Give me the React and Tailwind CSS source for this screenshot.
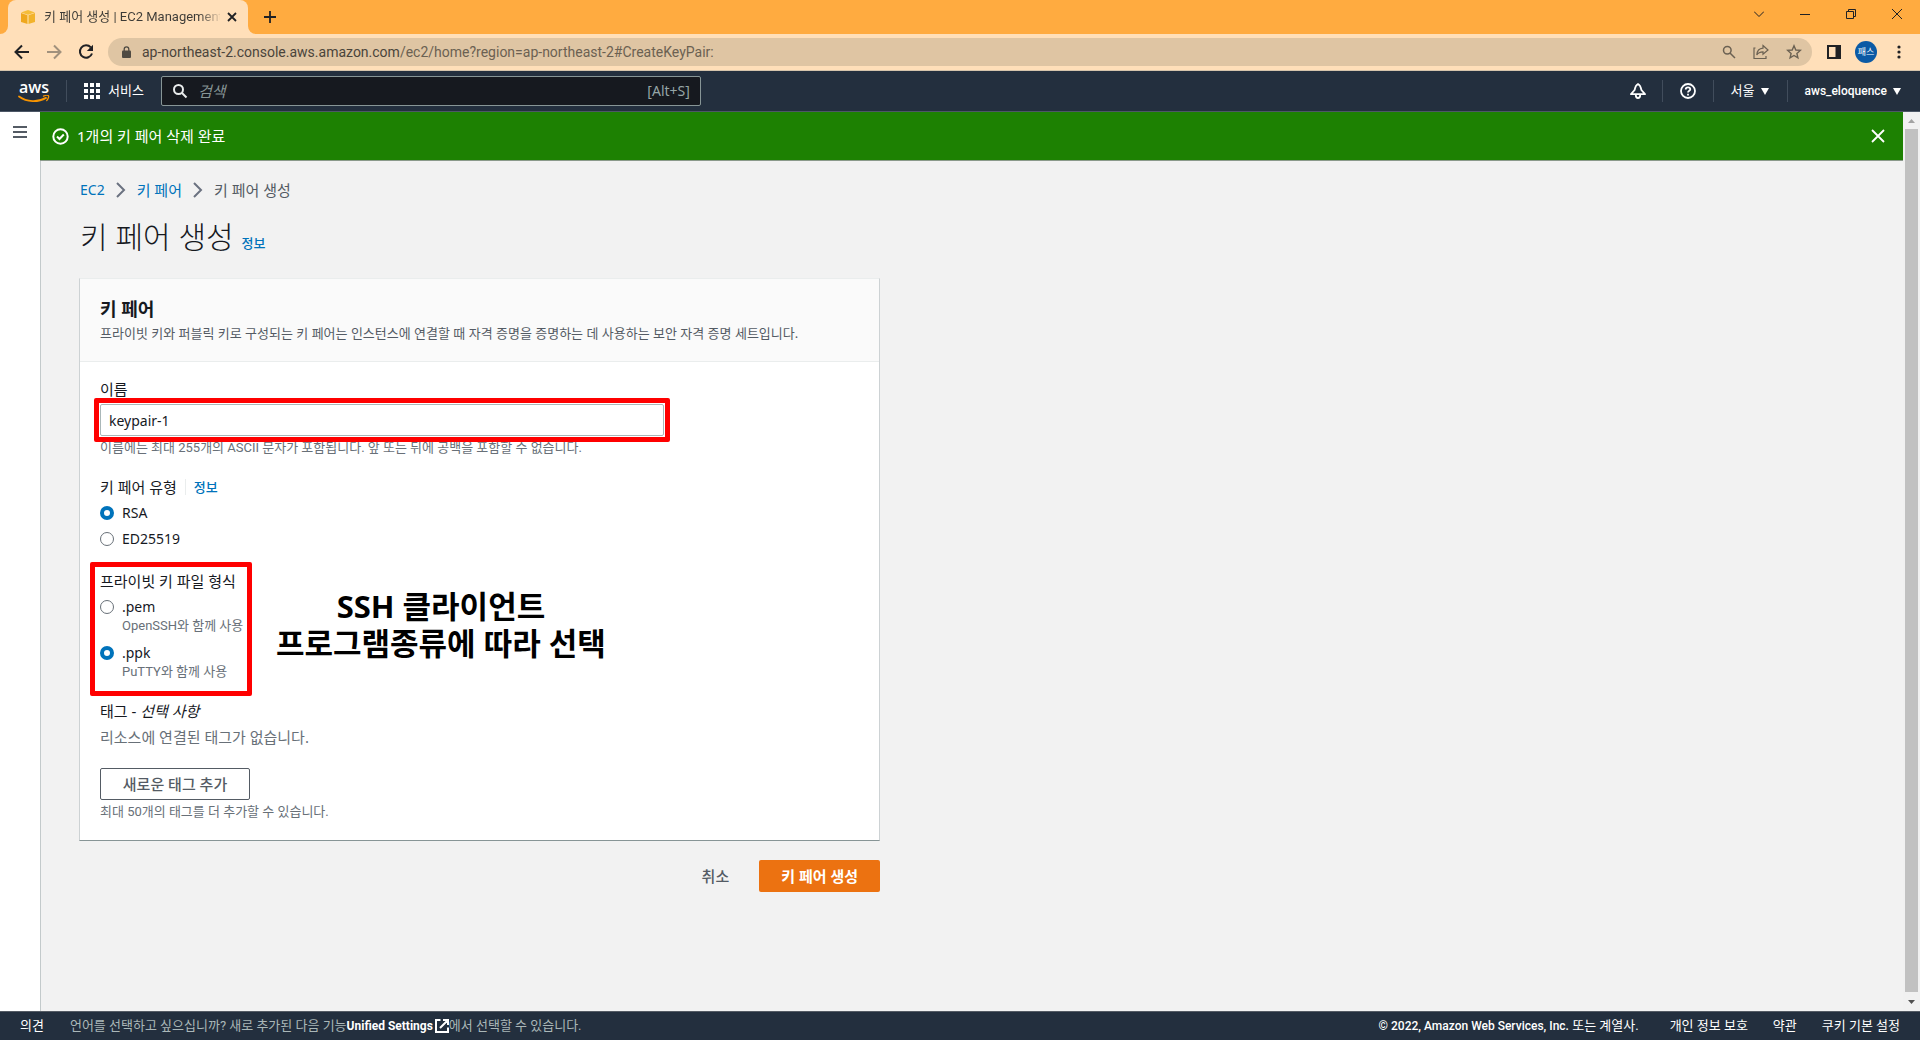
import { useState } from 'react';

const KEY_TYPES = [
  { value: 'rsa', label: 'RSA' },
  { value: 'ed25519', label: 'ED25519' },
];

const FILE_FORMATS = [
  { value: 'pem', label: '.pem', hint: 'OpenSSH와 함께 사용' },
  { value: 'ppk', label: '.ppk', hint: 'PuTTY와 함께 사용' },
];

const FOOTER_LINKS = ['개인 정보 보호', '약관', '쿠키 기본 설정'];

function CubeIcon() {
  return (
    <svg width="16" height="16" viewBox="0 0 16 16">
      <path d="M8 1 15 3.4 8 5.8 1 3.4Z" fill="#f5bd3a" />
      <path d="M1 4 7.6 6.2V15L1 12.9Z" fill="#efa81f" />
      <path d="M15 4 8.4 6.2V15L15 12.9Z" fill="#f2b32c" />
      <path d="M8 6v9" stroke="#fbdc8c" strokeWidth=".8" />
    </svg>
  );
}

function BrowserTabs() {
  return (
    <div className="flex h-[34px] bg-[#ffab40] text-[#202124]">
      <div className="flex w-2 items-end bg-[#ffdfb9]">
        <div className="h-full w-full rounded-br-lg bg-[#ffab40]" />
      </div>
      <div className="flex w-60 items-center rounded-t-lg bg-[#ffdfb9] pl-3 pr-2">
        <CubeIcon />
        <span className="ml-2 w-[176px] whitespace-nowrap bg-linear-to-r from-[#3c3a36] from-88% to-[#3c3a36]/10 bg-clip-text font-['Roboto','Noto_Sans_CJK_KR',sans-serif] text-[13px] leading-5 text-transparent">
          키 페어 생성 | EC2 Management
        </span>
        <button type="button" aria-label="탭 닫기" className="ml-1.5">
          <svg width="12" height="12" viewBox="0 0 12 12" stroke="currentColor" strokeWidth="1.8">
            <path d="m2 2 8 8M10 2l-8 8" />
          </svg>
        </button>
      </div>
      <div className="flex w-2 bg-[#ffdfb9]">
        <div className="h-full w-full rounded-bl-lg bg-[#ffab40]" />
      </div>
      <button type="button" aria-label="새 탭" className="ml-1 p-1">
        <svg width="12" height="12" viewBox="0 0 12 12" stroke="currentColor" strokeWidth="1.8">
          <path d="M6 0v12M0 6h12" />
        </svg>
      </button>
      <div className="ml-auto flex items-center gap-9 pr-[18px] pb-1.5">
        <button type="button" aria-label="탭 검색">
          <svg width="10" height="10" viewBox="0 0 10 10" fill="none" stroke="currentColor">
            <path d="m0 2.5 5 5 5-5" />
          </svg>
        </button>
        <button type="button" aria-label="최소화">
          <svg width="10" height="10" viewBox="0 0 10 10" stroke="currentColor">
            <path d="M0 5.5h10" />
          </svg>
        </button>
        <button type="button" aria-label="창 크기 조절">
          <svg width="10" height="10" viewBox="0 0 10 10" fill="none" stroke="currentColor">
            <path d="M.5 2.5h7v7h-7zM2.5 2.5v-2h7v7h-2" />
          </svg>
        </button>
        <button type="button" aria-label="닫기">
          <svg width="10" height="10" viewBox="0 0 10 10" stroke="currentColor">
            <path d="m0 0 10 10M10 0 0 10" />
          </svg>
        </button>
      </div>
    </div>
  );
}

function AddressBar() {
  return (
    <div className="flex h-[37px] items-center border-b border-[#d5c4ac] bg-[#ffdfb9] pl-3.5 pr-[13px] text-[#202124]">
      <button type="button" aria-label="뒤로">
        <svg width="16" height="16" viewBox="0 0 16 16" fill="none" stroke="currentColor" strokeWidth="2">
          <path d="M15 8H2M8 1.5 1.5 8 8 14.5" />
        </svg>
      </button>
      <button type="button" aria-label="앞으로" className="ml-4 text-[#a1917d]">
        <svg width="16" height="16" viewBox="0 0 16 16" fill="none" stroke="currentColor" strokeWidth="2">
          <path d="M1 8h13M8 1.5 14.5 8 8 14.5" />
        </svg>
      </button>
      <button type="button" aria-label="새로고침" className="ml-4">
        <svg width="16" height="16" viewBox="0 0 16 16" fill="none" stroke="currentColor" strokeWidth="2">
          <path d="M12.8 3.4A6.2 6.2 0 1 0 14 9.5" />
          <path d="M15 .8V7H8.8Z" fill="currentColor" stroke="none" />
        </svg>
      </button>
      <div className="ml-3.5 flex h-7 flex-1 items-center rounded-full bg-[#dfc5a3] pl-3.5 pr-2.5 text-[#6b6152]">
        <svg width="10" height="13" viewBox="0 0 10 13" fill="#4f4a42">
          <rect x="0" y="4.5" width="9" height="7.5" rx="1" />
          <path d="M2.2 5V3.2a2.3 2.3 0 0 1 4.6 0V5" fill="none" stroke="#4f4a42" strokeWidth="1.3" />
        </svg>
        <span className="ml-2.5 flex-1 truncate font-['Roboto',sans-serif] text-sm leading-5">
          <span className="text-[#4a443b]">ap-northeast-2.console.aws.amazon.com</span>
          /ec2/home?region=ap-northeast-2#CreateKeyPair:
        </span>
        <div className="flex items-center gap-[17px]">
          <button type="button" aria-label="확대/축소">
            <svg width="14" height="14" viewBox="0 0 14 14" fill="none" stroke="currentColor" strokeWidth="1.5">
              <circle cx="5.3" cy="5.3" r="3.8" />
              <path d="m8 8 5 5" />
            </svg>
          </button>
          <button type="button" aria-label="공유">
            <svg width="16" height="16" viewBox="0 0 16 16" fill="none" stroke="currentColor" strokeWidth="1.2">
              <path d="M2.5 4H1v10.5h12V12" />
              <path d="M10 1.5 15 6l-5 4.3V7.8C7 7.8 5 8.8 3.8 11 4 7.5 6 4.5 10 4.2Z" />
            </svg>
          </button>
          <button type="button" aria-label="북마크">
            <svg width="16" height="16" viewBox="0 0 16 16" fill="none" stroke="currentColor" strokeWidth="1.4">
              <path d="m8 1.8 1.8 4.2 4.5.4-3.4 3 1 4.5L8 11.5l-3.9 2.4 1-4.5-3.4-3 4.5-.4Z" />
            </svg>
          </button>
        </div>
      </div>
      <button type="button" aria-label="측면 패널" className="ml-[15px]">
        <svg width="14" height="14" viewBox="0 0 14 14" fill="currentColor">
          <path d="M0 0h14v14H0zM2 2v10h6.5V2z" fillRule="evenodd" />
        </svg>
      </button>
      <button type="button" className="ml-3.5 flex size-[22px] items-center justify-center rounded-full bg-[#0b5aa5] text-[9px] text-white">
        패스
      </button>
      <button type="button" aria-label="메뉴" className="ml-3.5">
        <svg width="16" height="14" viewBox="0 0 16 14" fill="currentColor">
          <circle cx="8" cy="2" r="1.6" />
          <circle cx="8" cy="7" r="1.6" />
          <circle cx="8" cy="12" r="1.6" />
        </svg>
      </button>
    </div>
  );
}

function AwsLogo() {
  return (
    <span className="flex w-8 flex-col items-center">
      <span className="font-['Open_Sans',sans-serif] text-base font-semibold leading-4">aws</span>
      <svg width="32" height="8" viewBox="0 0 32 8" fill="none" stroke="#f79400" strokeLinecap="round">
        <path d="M1 1.5c8 5.8 19 6 27 1.4" strokeWidth="1.8" />
        <path d="M25.5 1.2c2-.9 4.5-1 5-.4s-.2 3.2-1.8 4.8" strokeWidth="1.3" />
      </svg>
    </span>
  );
}

function CaretDown() {
  return (
    <svg width="8" height="7" viewBox="0 0 8 7" fill="currentColor">
      <path d="M0 0h8L4 7z" />
    </svg>
  );
}

function ConsoleNav() {
  return (
    <header className="flex h-[41px] items-center border-b border-[#4c5766] bg-[#232f3e] text-[13px] text-white">
      <a href="#" aria-label="AWS" className="ml-[18px]"><AwsLogo /></a>
      <div className="ml-4 h-[22px] w-px bg-[#414d5c]" />
      <button type="button" className="ml-[17px] flex items-center gap-2">
        <svg width="16" height="16" viewBox="0 0 16 16" fill="currentColor">
          {[0, 6, 12].map((y) => [0, 6, 12].map((x) => <rect key={`${x}-${y}`} x={x} y={y} width="4" height="4" />))}
        </svg>
        서비스
      </button>
      <label className="ml-[17px] flex h-[30px] w-[540px] items-center rounded-xs border border-[#879596] bg-[#16191f] px-2.5 text-[#95a5a6]">
        <svg width="16" height="16" viewBox="0 0 16 16" fill="none" stroke="#eaeded" strokeWidth="2">
          <circle cx="6.5" cy="6.5" r="4.5" />
          <path d="m10 10 4.5 4.5" />
        </svg>
        <input type="text" aria-label="검색" placeholder="검색"
               className="ml-2.5 min-w-0 flex-1 bg-transparent text-[15px] italic outline-none placeholder:text-[#879596]" />
        <span className="text-sm">[Alt+S]</span>
      </label>
      <div className="ml-auto flex items-center">
        <button type="button" aria-label="알림" className="mr-4">
          <svg width="16" height="16" viewBox="0 0 16 16" fill="none" stroke="currentColor" strokeWidth="1.8">
            <path d="M8 1C6 2 5.2 4 4.6 7L1 11.2h14L11.4 7C10.800 4 10 2 8 1Z" strokeLinejoin="round" />
            <path d="M5.8 12c0 4 4.4 4 4.4 0" />
          </svg>
        </button>
        <div className="h-[22px] w-px bg-[#414d5c]" />
        <button type="button" aria-label="도움말" className="mx-[17px]">
          <svg width="16" height="16" viewBox="0 0 16 16" fill="none" stroke="currentColor" strokeWidth="1.8">
            <circle cx="8" cy="8" r="7" />
            <path d="M5.7 6.5c0-3 4.6-2.8 4.6-.2C10.3 7.800 8 7.800 8 9.600M8 10.800v1.600" />
          </svg>
        </button>
        <div className="h-[22px] w-px bg-[#414d5c]" />
        <button type="button" className="ml-[17px] mr-[18px] flex items-center gap-1.5">서울 <CaretDown /></button>
        <div className="h-[22px] w-px bg-[#414d5c]" />
        <button type="button" className="ml-[17px] mr-[19px] flex items-center gap-1.5 font-['Roboto',sans-serif] text-xs font-medium">
          aws_eloquence <CaretDown />
        </button>
      </div>
    </header>
  );
}

function Flash() {
  return (
    <div className="flex h-[49px] items-center border-b border-[#8b9a8b] bg-[#1d8102] pl-3 pr-[18px] text-white">
      <svg width="17" height="17" viewBox="0 0 17 17" fill="none" stroke="currentColor" strokeWidth="2">
        <circle cx="8.5" cy="8.5" r="7.2" />
        <path d="m5 8.5 2.5 2.5 4.3-4.5" />
      </svg>
      <p className="ml-2 text-[15px]">1개의 키 페어 삭제 완료</p>
      <button type="button" aria-label="알림 닫기" className="ml-auto">
        <svg width="14" height="14" viewBox="0 0 14 14" stroke="currentColor" strokeWidth="1.8">
          <path d="m1 1 12 12M13 1 1 13" />
        </svg>
      </button>
    </div>
  );
}

function Chevron() {
  return (
    <svg width="10" height="16" viewBox="0 0 10 16" fill="none" stroke="#6b7280" strokeWidth="2">
      <path d="m1 1 7 7-7 7" />
    </svg>
  );
}

function Breadcrumbs() {
  return (
    <nav className="flex items-center gap-[11px] text-[15px] leading-5">
      <a href="#" className="text-sm text-[#0073bb]">EC2</a>
      <Chevron />
      <a href="#" className="text-[#0073bb]">키 페어</a>
      <Chevron />
      <span className="text-[#545b64]">키 페어 생성</span>
    </nav>
  );
}

function Hint({ children }) {
  return (
    <span className="block font-['Roboto','Noto_Sans_CJK_KR',sans-serif] text-[13px] leading-4 text-[#687078]">
      {children}
    </span>
  );
}

function RadioOption({ name, option, checked, onChange }) {
  return (
    <label className="flex gap-2">
      <input type="radio" name={name} value={option.value} checked={checked} onChange={() => onChange(option.value)}
             className="mt-1 size-3.5 appearance-none rounded-full border border-[#687078] bg-white checked:border-4 checked:border-[#0073bb]" />
      <span>
        <span className="block text-sm leading-[22px]">{option.label}</span>
        {option.hint && <Hint>{option.hint}</Hint>}
      </span>
    </label>
  );
}

function KeyPairForm() {
  const [name, setName] = useState('keypair-1');
  const [keyType, setKeyType] = useState('rsa');
  const [format, setFormat] = useState('ppk');

  return (
    <form className="w-full max-w-[801px]" onSubmit={(e) => e.preventDefault()}>
      <section className="border border-t-[#eaeded] border-x-[#cdd2d4] border-b-[#879596] bg-white">
        <div className="h-[83px] border-b border-[#eaeded] bg-[#fafafa] px-5 pt-4">
          <h2 className="text-lg font-bold leading-7">키 페어</h2>
          <p className="text-[13px] leading-5 text-[#545b64]">
            프라이빗 키와 퍼블릭 키로 구성되는 키 페어는 인스턴스에 연결할 때 자격 증명을 증명하는 데 사용하는 보안 자격 증명 세트입니다.
          </p>
        </div>

        <div className="flex flex-col gap-5 px-5 pt-4 pb-5 text-[15px] leading-[22px]">
          <div>
            <label htmlFor="name" className="block">이름</label>
            <div className="relative mt-1 mb-1 w-[564px]">
              <input id="name" type="text" value={name} onChange={(e) => setName(e.target.value)}
                     className="block h-8 w-full rounded-xs border border-[#aab7b8] bg-white px-2 text-sm outline-none" />
              <div className="pointer-events-none absolute -inset-1.5 rounded-xs border-5 border-[#ff0000]" />
            </div>
            <Hint>이름에는 최대 255개의 ASCII 문자가 포함됩니다. 앞 또는 뒤에 공백을 포함할 수 없습니다.</Hint>
          </div>

          <fieldset>
            <legend className="flex items-center">
              키 페어 유형
              <a href="#" className="ml-2 border-l border-[#eaeded] pl-2 text-[13px] font-medium leading-4 text-[#0073bb]">정보</a>
            </legend>
            <div className="mt-1 flex flex-col gap-1">
              {KEY_TYPES.map((t) => (
                <RadioOption key={t.value} name="keyType" option={t} checked={keyType === t.value} onChange={setKeyType} />
              ))}
            </div>
          </fieldset>

          <div className="relative">
            <fieldset>
              <legend>프라이빗 키 파일 형식</legend>
              <div className="mt-1 flex flex-col gap-2">
                {FILE_FORMATS.map((f) => (
                  <RadioOption key={f.value} name="format" option={f} checked={format === f.value} onChange={setFormat} />
                ))}
              </div>
            </fieldset>
            <div className="pointer-events-none absolute -left-2.5 -top-2 -bottom-4 w-[162px] rounded-xs border-5 border-[#ff0000]" />
            <p className="absolute left-44 top-[18px] whitespace-nowrap text-center text-[31px] font-bold leading-[37px] text-black">
              SSH 클라이언트
              <br />
              프로그램종류에 따라 선택
            </p>
          </div>

          <div>
            <p>태그 - <em>선택 사항</em></p>
            <p className="mt-1 text-[#687078]">리소스에 연결된 태그가 없습니다.</p>
            <button type="button" className="mt-5 mb-1 block h-8 w-[150px] rounded-xs border border-[#545b64] font-medium leading-5 text-[#545b64]">
              새로운 태그 추가
            </button>
            <Hint>최대 50개의 태그를 더 추가할 수 있습니다.</Hint>
          </div>
        </div>
      </section>

      <div className="mt-[19px] flex justify-end gap-2 text-[15px] leading-5">
        <button type="button" className="h-8 px-[22px] font-medium text-[#545b64]">취소</button>
        <button type="submit" className="h-8 rounded-xs bg-[#ec7211] px-[22px] font-bold text-white">키 페어 생성</button>
      </div>
    </form>
  );
}

function Scrollbar() {
  return (
    <div className="flex w-[17px] flex-col items-center bg-[#f1f1f1]">
      <div className="flex h-[17px] items-center">
        <svg width="7" height="4" viewBox="0 0 7 4" fill="#a3a3a3"><path d="M0 4h7L3.5 0z" /></svg>
      </div>
      <div className="w-[13px] flex-1 bg-[#c1c1c1]" />
      <div className="flex h-[19px] items-center">
        <svg width="7" height="4" viewBox="0 0 7 4" fill="#505050"><path d="M0 0h7L3.5 4z" /></svg>
      </div>
    </div>
  );
}

function Footer() {
  return (
    <footer className="flex h-[29px] items-center border-t border-[#545b64] bg-[#232f3e] px-5 font-['Roboto','Noto_Sans_CJK_KR',sans-serif] text-[13px] leading-5 text-white">
      <a href="#">의견</a>
      <p className="ml-[26px] flex items-center text-[#aab7b8]">
        언어를 선택하고 싶으십니까? 새로 추가된 다음 기능
        <a href="#" className="flex items-center gap-0.5 text-xs font-bold text-white">
          Unified Settings
          <svg width="14" height="14" viewBox="0 0 14 14" fill="none" stroke="currentColor" strokeWidth="2">
            <path d="M5.5 1H1v12h12V8.5M8 1h5v5M13 1 5 9" />
          </svg>
        </a>
        에서 선택할 수 있습니다.
      </p>
      <div className="ml-auto flex gap-[25px]">
        <span className="mr-1.5"><span className="text-xs font-medium">© 2022, Amazon Web Services, Inc.</span> 또는 계열사.</span>
        {FOOTER_LINKS.map((l) => <a key={l} href="#">{l}</a>)}
      </div>
    </footer>
  );
}

export default function App() {
  return (
    <div className="flex h-screen flex-col bg-[#f2f2f2] font-['Noto_Sans','Noto_Sans_CJK_KR',sans-serif] text-[#16191f]">
      <BrowserTabs />
      <AddressBar />
      <ConsoleNav />
      <div className="flex min-h-0 flex-1">
        <aside className="w-10 bg-white pl-[13px] pt-[14px]">
          <button type="button" aria-label="메뉴 열기" className="block">
            <svg width="14" height="12" viewBox="0 0 14 12" stroke="#545b64" strokeWidth="2">
              <path d="M0 1h14M0 6h14M0 11h14" />
            </svg>
          </button>
        </aside>
        <main className="flex min-w-0 flex-1 flex-col">
          <Flash />
          <div className="flex-1 border-l border-[#c3cacb] px-[38px] pt-[19px]">
            <div className="pl-px">
              <Breadcrumbs />
              <h1 className="mt-[17px] mb-[15px] flex items-baseline gap-2 text-[30px] font-light leading-10">
                키 페어 생성
                <a href="#" className="text-[13px] font-medium text-[#0073bb]">정보</a>
              </h1>
            </div>
            <KeyPairForm />
          </div>
        </main>
        <Scrollbar />
      </div>
      <Footer />
    </div>
  );
}
